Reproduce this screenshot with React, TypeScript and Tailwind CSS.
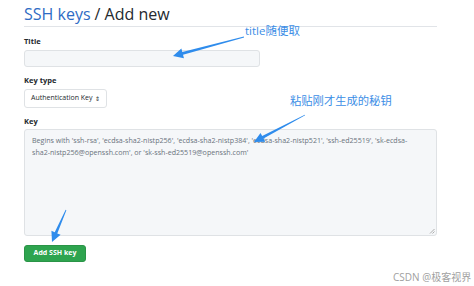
import React from "react";

const sans = { fontFamily: '"Open Sans", "Noto Sans", "Noto Sans CJK SC", sans-serif' };

function Arrow({ x1, y1, x2, y2 }: { x1: number; y1: number; x2: number; y2: number }) {
  const dx = x2 - x1;
  const dy = y2 - y1;
  const len = Math.hypot(dx, dy);
  const ux = dx / len;
  const uy = dy / len;
  const px = -uy;
  const py = ux;
  const hl = 10;
  const hw = 5;
  const bx = x2 - ux * hl;
  const by = y2 - uy * hl;
  const pts = [
    [x1 + px * 0.4, y1 + py * 0.4],
    [bx + px * 1.4, by + py * 1.4],
    [bx + px * hw, by + py * hw],
    [x2, y2],
    [bx - px * hw, by - py * hw],
    [bx - px * 1.4, by - py * 1.4],
    [x1 - px * 0.4, y1 - py * 0.4],
  ]
    .map((p) => p.join(","))
    .join(" ");
  return <polygon points={pts} fill="#2f8cec" />;
}

export default function App() {
  return (
    <div className="relative w-[474px] h-[286px] bg-white overflow-hidden text-[#24292e]" style={sans}>
      <div className="w-[413px] ml-6 pt-[4px]">
        <div className="flex items-baseline text-[16px] leading-[20px] pb-[2px] border-b border-[#e1e4e8]">
          <span className="text-[#2e6bc4]">SSH keys</span>
          <span className="ml-[4px]">/ Add new</span>
        </div>

        <div className="mt-[9px] text-[7.5px] font-bold leading-[10px]">Title</div>
        <div className="mt-[4px] w-[236px] h-[17px] rounded-[3px] border border-[#dfe2e5] bg-[#f5f7f9]" />

        <div className="mt-[8px] text-[7.5px] font-bold leading-[10px]">Key type</div>
        <div className="mt-[4px] w-[83px] h-[19px] rounded-[3px] border border-[#dfe2e5] bg-white flex items-center px-[6px] text-[7px] text-[#24292e]">
          <span>Authentication Key</span>
          <span className="ml-auto text-[6px] leading-none">⇕</span>
        </div>

        <div className="mt-[8px] text-[7.5px] font-bold leading-[10px]">Key</div>
        <div className="relative mt-[3px] h-[107px] rounded-[3px] border border-[#dfe2e5] bg-[#f5f7f9] pl-[7px] pr-[20px] pt-[5px] text-[7.1px] leading-[11.5px] text-[#6a737d]">
          Begins with 'ssh-rsa', 'ecdsa-sha2-nistp256', 'ecdsa-sha2-nistp384', 'ecdsa-sha2-nistp521', 'ssh-ed25519', 'sk-ecdsa-sha2-nistp256@openssh.com', or 'sk-ssh-ed25519@openssh.com'
          <svg className="absolute right-[1px] bottom-[1px]" width="6" height="6" viewBox="0 0 6 6">
            <path d="M5.5 1 L1 5.5 M5.5 3.5 L3.5 5.5" stroke="#999" strokeWidth="0.8" />
          </svg>
        </div>

        <button className="mt-[9px] h-[17px] w-[62px] rounded-[3px] bg-[#2ea44f] text-white text-[7px] font-bold flex items-center justify-center border border-[#2a9447]">
          Add SSH key
        </button>
      </div>

      <div className="absolute left-[245px] top-[24px] text-[11.5px] text-[#3b8ee6] leading-[14px]" style={sans}>
        title随便取
      </div>
      <div className="absolute left-[290px] top-[94px] text-[11.3px] text-[#3b8ee6] leading-[14px]" style={sans}>
        粘贴刚才生成的秘钥
      </div>
      <div className="absolute left-[393px] top-[271px] text-[10px] text-[#a0a0a0] leading-[12px]" style={sans}>
        CSDN @极客视界
      </div>

      <svg className="absolute inset-0 pointer-events-none" width="474" height="286">
        <Arrow x1={244} y1={37} x2={173} y2={56} />
        <Arrow x1={305} y1={115} x2={254} y2={142} />
        <Arrow x1={66} y1={210} x2={52} y2={242} />
      </svg>
    </div>
  );
}
